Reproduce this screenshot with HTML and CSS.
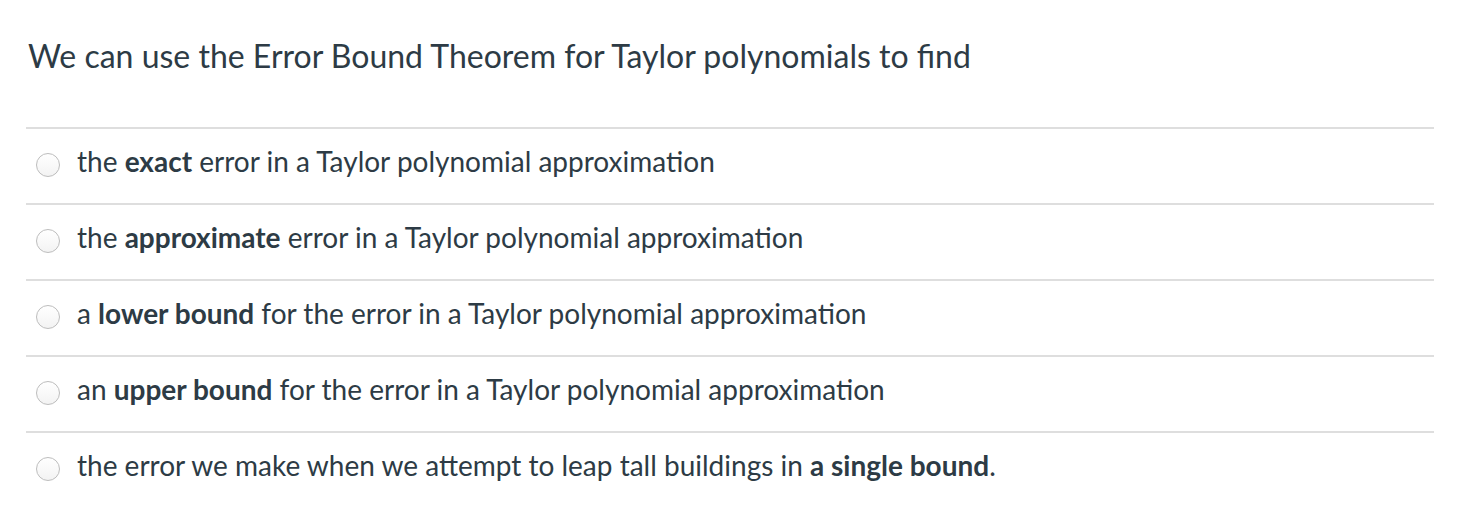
FILE: index.html
```html
<!DOCTYPE html>
<html>
<head>
<meta charset="utf-8">
<link rel="stylesheet" href="styles.css">
</head>
<body>
<div class="quiz">
  <div class="question">We can use the Error Bound Theorem for Taylor polynomials to find</div>
  <div class="answers">
    <label class="answer"><span class="radio"></span><span class="text">the <b>exact</b> error in a Taylor polynomial approximation</span></label>
    <label class="answer"><span class="radio"></span><span class="text">the <b>approximate</b> error in a Taylor polynomial approximation</span></label>
    <label class="answer"><span class="radio"></span><span class="text">a <b>lower bound</b> for the error in a Taylor polynomial approximation</span></label>
    <label class="answer"><span class="radio"></span><span class="text">an <b>upper bound</b> for the error in a Taylor polynomial approximation</span></label>
    <label class="answer"><span class="radio"></span><span class="text">the error we make when we attempt to leap tall buildings in <b>a single bound</b>.</span></label>
  </div>
</div>
</body>
</html>
```
FILE: styles.css
```css
html, body {
  margin: 0;
  padding: 0;
  background: #ffffff;
}
body {
  font-family: Lato, "Open Sans", sans-serif;
  color: #2d3b45;
}
.quiz {
  width: 1408px;
  margin-left: 26px;
}
.question {
  font-size: 32px;
  line-height: 38px;
  padding: 37px 0 0 2px;
  height: 127px;
  box-sizing: border-box;
}
.answers {
  display: flex;
  flex-direction: column;
}
.answer {
  display: flex;
  align-items: center;
  height: 76px;
  box-sizing: border-box;
  border-top: 2px solid #dedede;
  padding-left: 10px;
  padding-bottom: 10px;
}
.radio {
  width: 22px;
  height: 22px;
  border-radius: 50%;
  border: 1px solid #bdbdbd;
  background: linear-gradient(#ffffff, #f3f3f3);
  flex: none;
  margin-right: 17px;
  margin-top: 8px;
}
.text {
  font-size: 28px;
  line-height: 34px;
}
.text b {
  font-weight: 700;
}
```
